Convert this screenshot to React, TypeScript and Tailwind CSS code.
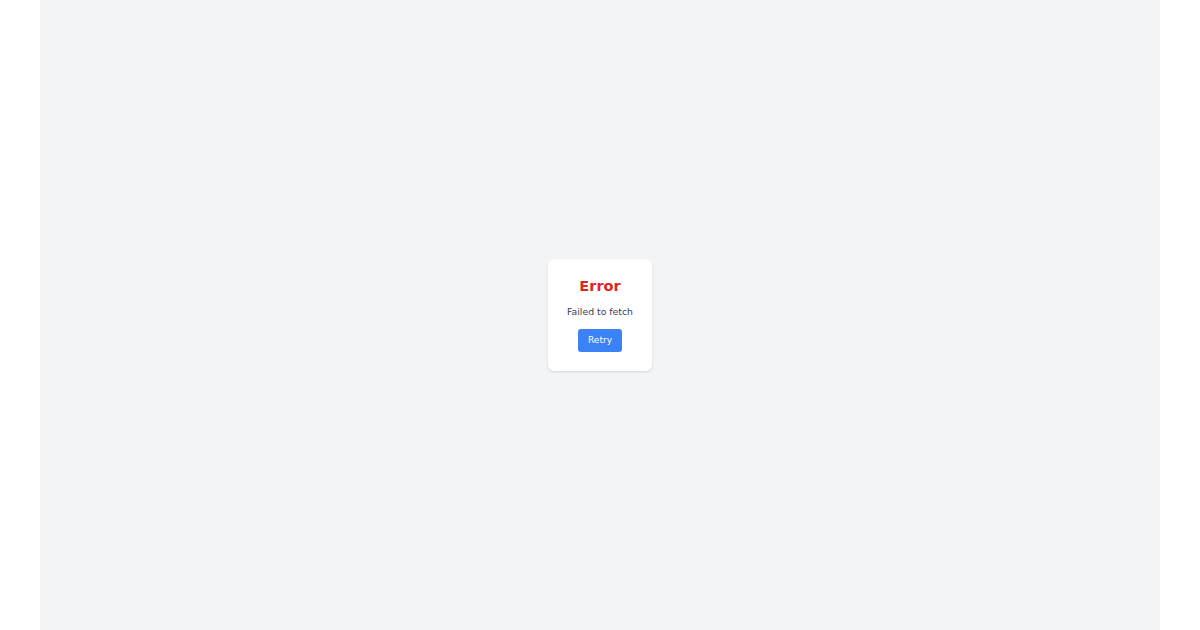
import React from 'react';

const App: React.FC = () => {
    return (
        <div className="min-h-screen bg-white" style={{ fontFamily: '"DejaVu Sans", sans-serif' }}>
            <div className="mx-[40px] min-h-screen bg-[#f3f4f6] flex items-center justify-center">
                <div className="bg-white rounded-[6px] shadow-sm p-[19px] flex flex-col items-center text-center">
                    <h2 className="text-[14.5px] leading-[16px] font-bold text-[#dc2626] mb-[12px]">Error</h2>
                    <p className="text-[9.3px] leading-[12px] text-[#374151] mb-[11px]">Failed to fetch</p>
                    <button className="bg-[#3b82f6] text-white text-[9px] leading-[11px] px-[10px] py-[6px] rounded-[3px]">
                        Retry
                    </button>
                </div>
            </div>
        </div>
    );
};

export default App;
